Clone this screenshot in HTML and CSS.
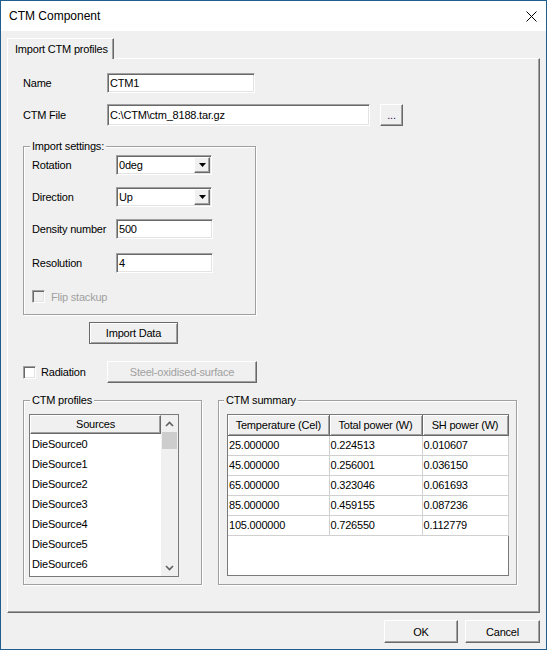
FILE: index.html
```html
<!DOCTYPE html>
<html lang="en">
  <head>
    <meta charset="UTF-8" />
    <title>CTM Component</title>
    <link rel="stylesheet" href="styles.css">
  </head>
  <body>
    <div class="window">
      <div class="titlebar">
        <span>CTM Component</span>
        <svg class="close" width="11" height="11" viewBox="0 0 11 11">
          <path d="M0.5 0.5 L10.5 10.5 M10.5 0.5 L0.5 10.5" stroke="#000" stroke-width="1" fill="none" />
        </svg>
      </div>
      <div class="client">
        <div class="tab">Import CTM profiles</div>
        <div class="panel">
          <div class="row row-name">
            <span class="label">Name</span>
            <div class="edit name-edit">CTM1</div>
          </div>
          <div class="row row-file">
            <span class="label">CTM File</span>
            <div class="edit file-edit">C:\CTM\ctm_8188.tar.gz</div>
            <button class="btn browse">...</button>
          </div>

          <div class="group settings">
            <div class="group-title">Import settings:</div>
            <div class="grow first">
              <span class="glabel">Rotation</span>
              <div class="combo">
                <span class="combo-text">0deg</span>
                <span class="drop"><svg width="7" height="4" viewBox="0 0 7 4"><path d="M0 0 H7 L3.5 4 Z" fill="#000" /></svg></span>
              </div>
            </div>
            <div class="grow">
              <span class="glabel">Direction</span>
              <div class="combo">
                <span class="combo-text">Up</span>
                <span class="drop"><svg width="7" height="4" viewBox="0 0 7 4"><path d="M0 0 H7 L3.5 4 Z" fill="#000" /></svg></span>
              </div>
            </div>
            <div class="grow">
              <span class="glabel">Density number</span>
              <div class="edit small-edit">500</div>
            </div>
            <div class="grow res">
              <span class="glabel">Resolution</span>
              <div class="edit small-edit">4</div>
            </div>
            <div class="check-row disabled">
              <span class="check"></span>
              <span>Flip stackup</span>
            </div>
          </div>

          <button class="btn default import">Import Data</button>

          <div class="row radiation">
            <div class="radio-label">
              <span class="check white"></span>
              <span>Radiation</span>
            </div>
            <button class="btn steel">Steel-oxidised-surface</button>
          </div>

          <div class="bottom-groups">
            <div class="group profiles">
              <div class="group-title">CTM profiles</div>
              <div class="list">
                <div class="list-body">
                  <div class="list-head">Sources</div>
                  <div class="item">DieSource0</div>
                  <div class="item">DieSource1</div>
                  <div class="item">DieSource2</div>
                  <div class="item">DieSource3</div>
                  <div class="item">DieSource4</div>
                  <div class="item">DieSource5</div>
                  <div class="item">DieSource6</div>
                </div>
                <div class="vscroll">
                  <div class="sb-btn"><svg width="9" height="6" viewBox="0 0 9 6"><path d="M1 5 L4.5 1.5 L8 5" stroke="#606060" stroke-width="1.6" fill="none" /></svg></div>
                  <div class="sb-thumb"></div>
                  <div class="sb-track"></div>
                  <div class="sb-btn"><svg width="9" height="6" viewBox="0 0 9 6"><path d="M1 1 L4.5 4.5 L8 1" stroke="#606060" stroke-width="1.6" fill="none" /></svg></div>
                </div>
              </div>
            </div>
            <div class="group summary">
              <div class="group-title">CTM summary</div>
              <div class="grid">
                <table>
                  <tr>
                    <th class="c1">Temperature (Cel)</th>
                    <th class="c2">Total power (W)</th>
                    <th class="c3">SH power (W)</th>
                  </tr>
                  <tr><td>25.000000</td><td>0.224513</td><td>0.010607</td></tr>
                  <tr><td>45.000000</td><td>0.256001</td><td>0.036150</td></tr>
                  <tr><td>65.000000</td><td>0.323046</td><td>0.061693</td></tr>
                  <tr><td>85.000000</td><td>0.459155</td><td>0.087236</td></tr>
                  <tr><td>105.000000</td><td>0.726550</td><td>0.112779</td></tr>
                </table>
              </div>
            </div>
          </div>
        </div>
        <div class="footer">
          <button class="btn ok">OK</button>
          <button class="btn cancel">Cancel</button>
        </div>
      </div>
    </div>
  </body>
</html>
```

FILE: styles.css
```css
* {
  box-sizing: border-box;
}
body {
  margin: 0;
  font-family: "Liberation Sans", Arial, sans-serif;
  font-size: 11px;
  letter-spacing: -0.2px;
  color: #000;
  background: #fff;
}
.window {
  width: 547px;
  height: 650px;
  border: 1px solid #1f5f8f;
  background: #f0f0f0;
  display: flex;
  flex-direction: column;
}
.titlebar {
  height: 30px;
  background: #fff;
  display: flex;
  align-items: center;
  justify-content: space-between;
  padding: 0 9px 0 8px;
  font-size: 12px;
  letter-spacing: 0;
}
.client {
  flex: 1;
  padding: 7px 6px 0 6px;
}
.tab {
  position: relative;
  z-index: 1;
  width: 107px;
  height: 21px;
  margin-bottom: -1px;
  padding: 4px 0 0 7px;
  background: #f0f0f0;
  border: 1px solid;
  border-bottom: none;
  border-color: #fff #696969 #fff #fff;
  box-shadow: inset -1px 0 0 #a0a0a0;
}
.panel {
  height: 555px;
  padding-left: 15px;
  border: 1px solid;
  border-color: #fff #696969 #696969 #fff;
  box-shadow: inset -1px -1px 0 #a0a0a0;
}

/* edits, buttons */
.edit {
  display: flex;
  align-items: center;
  height: 20px;
  padding-left: 2px;
  background: #fff;
  border: 1px solid;
  border-color: #a0a0a0 #fff #fff #a0a0a0;
  box-shadow: inset 1px 1px 0 #696969, inset -1px -1px 0 #e3e3e3;
  white-space: nowrap;
}
.btn {
  font-family: inherit;
  font-size: 11px;
  letter-spacing: -0.2px;
  color: #000;
  padding: 0;
  background: #f0f0f0;
  border: 1px solid;
  border-color: #fff #696969 #696969 #fff;
  box-shadow: inset -1px -1px 0 #a0a0a0;
}
.btn.default {
  border-color: #696969;
  box-shadow: inset 1px 1px 0 #fff, inset -1px -1px 0 #a0a0a0;
}

.row {
  display: flex;
  align-items: center;
}
.label {
  width: 84px;
}
.row-name {
  margin-top: 14px;
  height: 20px;
}
.name-edit {
  width: 148px;
}
.row-file {
  margin-top: 11px;
  height: 22px;
}
.file-edit {
  width: 263px;
  height: 22px;
}
.browse {
  width: 23px;
  height: 22px;
  margin-left: 10px;
  color: #300060;
}

/* group boxes */
.group {
  border: 1px solid #a0a0a0;
  box-shadow: inset 1px 1px 0 #fff, 1px 1px 0 #fff;
}
.group-title {
  width: max-content;
  height: 13px;
  line-height: 13px;
  margin-top: -7px;
  padding: 0 2px;
  background: #f0f0f0;
}
.settings {
  width: 233px;
  margin-top: 20px;
  padding: 0 0 11px 8px;
}
.settings .group-title {
  margin-left: -2px;
}
.grow {
  display: flex;
  align-items: center;
  height: 20px;
  margin-top: 12px;
}
.grow.first {
  margin-top: 2px;
}
.grow.res {
  margin-top: 14px;
}
.glabel {
  width: 84px;
}
.combo {
  display: flex;
  width: 96px;
  height: 20px;
  background: #fff;
  border: 1px solid;
  border-color: #a0a0a0 #fff #fff #a0a0a0;
  box-shadow: inset 1px 1px 0 #696969, inset -1px -1px 0 #e3e3e3;
  padding: 1px 1px 1px 1px;
}
.combo-text {
  flex: 1;
  padding-left: 1px;
  line-height: 16px;
}
.drop {
  width: 16px;
  height: 16px;
  display: flex;
  align-items: center;
  justify-content: center;
  background: #f0f0f0;
  border: 1px solid;
  border-color: #fff #696969 #696969 #fff;
  box-shadow: inset -1px -1px 0 #a0a0a0;
}
.small-edit {
  width: 97px;
}
.check-row {
  display: flex;
  align-items: center;
  height: 13px;
  margin-top: 17px;
  gap: 6px;
}
.check {
  display: block;
  width: 13px;
  height: 13px;
  background: #f0f0f0;
  border: 1px solid;
  border-color: #a0a0a0 #fff #fff #a0a0a0;
  box-shadow: inset 1px 1px 0 #696969, inset -1px -1px 0 #e3e3e3;
}
.check.white {
  background: #fff;
}
.disabled {
  color: #a0a0a0;
}

.import {
  display: block;
  width: 89px;
  height: 22px;
  margin: 7px 0 0 66px;
}
.radiation {
  margin-top: 17px;
  height: 22px;
}
.radio-label {
  width: 84px;
  display: flex;
  align-items: center;
  gap: 5px;
}
.steel {
  width: 150px;
  height: 22px;
  color: #a0a0a0;
}

/* bottom groups */
.bottom-groups {
  display: flex;
  gap: 16px;
  margin-top: 17px;
}
.profiles {
  width: 179px;
  height: 185px;
  padding-left: 5px;
}
.profiles .group-title {
  margin-left: 1px;
}
.summary {
  width: 299px;
  height: 185px;
  padding-left: 8px;
}
.summary .group-title {
  margin-left: -3px;
}
.list {
  display: flex;
  width: 150px;
  height: 163px;
  margin-top: 7px;
  background: #fff;
  border: 1px solid #7a7a7a;
}
.list-body {
  flex: 1;
  overflow: hidden;
}
.list-head {
  height: 19px;
  line-height: 17px;
  text-align: center;
  background: #f0f0f0;
  border: 1px solid;
  border-color: #fff #696969 #696969 #fff;
  box-shadow: inset -1px -1px 0 #a0a0a0;
}
.item {
  height: 20px;
  line-height: 20px;
  padding-left: 2px;
}
.vscroll {
  width: 17px;
  display: flex;
  flex-direction: column;
  background: #f0f0f0;
}
.sb-btn {
  height: 17px;
  display: flex;
  align-items: center;
  justify-content: center;
}
.sb-thumb {
  height: 17px;
  margin: 0 1px;
  background: #cdcdcd;
}
.sb-track {
  flex: 1;
}
.grid {
  width: 282px;
  height: 162px;
  margin-top: 7px;
  background: #fff;
  border: 1px solid #7a7a7a;
}
.grid table {
  border-collapse: collapse;
  table-layout: fixed;
  width: 280px;
}
.grid th {
  height: 20px;
  padding: 0;
  font-weight: normal;
  text-align: center;
  background: #f0f0f0;
  border-right: 1px solid #696969;
  border-bottom: 1px solid #696969;
  box-shadow: inset 1px 1px 0 #fff, inset -1px -1px 0 #a0a0a0;
}
.grid .c1 {
  width: 101px;
}
.grid .c2 {
  width: 93px;
}
.grid .c3 {
  width: 86px;
}
.grid td {
  height: 20px;
  padding: 0 0 0 1px;
  border-right: 1px solid #d0d0d0;
  border-bottom: 1px solid #d0d0d0;
  white-space: nowrap;
}

.footer {
  display: flex;
  justify-content: flex-end;
  gap: 7px;
  padding-top: 7px;
}
.ok {
  width: 74px;
  height: 23px;
}
.cancel {
  width: 75px;
  height: 23px;
}
```
